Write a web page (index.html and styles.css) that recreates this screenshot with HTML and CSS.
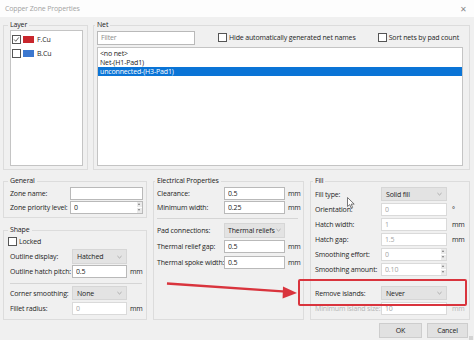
FILE: index.html
```html
<!DOCTYPE html>
<html lang="en">
<head>
  <meta charset="UTF-8">
  <meta name="viewport" content="width=device-width, initial-scale=1.0">
  <title>Copper Zone Properties</title>
  <link rel="stylesheet" href="styles.css">
</head>
<body>
  <div class="titlebar">
    <span class="title">Copper Zone Properties</span>
    <span class="close">✕</span>
  </div>

  <!-- Layer + net pickers -->
  <div class="top">
    <fieldset class="group layer-group">
      <legend>Layer</legend>
      <div class="listbox layers">
        <div class="layer-row">
          <span class="check"><svg viewBox="0 0 9 9"><polyline points="1.5,4.5 3.5,6.8 7.5,1.8" /></svg></span>
          <span class="swatch red"></span>F.Cu
        </div>
        <div class="layer-row">
          <span class="check"></span>
          <span class="swatch blue"></span>B.Cu
        </div>
      </div>
    </fieldset>

    <fieldset class="group net-group">
      <legend>Net</legend>
      <div class="net-filters">
        <input class="text filter" placeholder="Filter">
        <label class="checkline hide-auto"><span class="check"></span>Hide automatically generated net names</label>
        <label class="checkline sort-pads"><span class="check"></span>Sort nets by pad count</label>
      </div>
      <div class="listbox nets">
        <div class="net">&lt;no net&gt;</div>
        <div class="net">Net-(H1-Pad1)</div>
        <div class="net selected">unconnected-(H3-Pad1)</div>
      </div>
    </fieldset>
  </div>

  <!-- Settings -->
  <div class="bottom">
    <div class="left-col">
      <fieldset class="group general">
        <legend>General</legend>
        <div class="rows">
          <span class="lbl">Zone name:</span>
          <input class="text" value="">
          <span class="lbl">Zone priority level:</span>
          <div class="spin"><input class="text" value="0"><span class="spinner"><i class="up"></i><i class="down"></i></span></div>
        </div>
      </fieldset>

      <fieldset class="group shape">
        <legend>Shape</legend>
        <label class="checkline locked"><span class="check"></span>Locked</label>
        <div class="rows">
          <span class="lbl">Outline display:</span>
          <div class="select tall">Hatched<svg class="chev" viewBox="0 0 6 4"><polyline points="0.5,0.8 3,3.2 5.5,0.8" /></svg></div>
          <span></span>
          <span class="lbl">Outline hatch pitch:</span>
          <input class="text" value="0.5">
          <span class="unit">mm</span>
        </div>
        <div class="sep"></div>
        <div class="rows">
          <span class="lbl">Corner smoothing:</span>
          <div class="select">None<svg class="chev" viewBox="0 0 6 4"><polyline points="0.5,0.8 3,3.2 5.5,0.8" /></svg></div>
          <span></span>
          <span class="lbl">Fillet radius:</span>
          <input class="text" value="0" disabled>
          <span class="unit">mm</span>
        </div>
      </fieldset>
    </div>

    <fieldset class="group electrical">
      <legend>Electrical Properties</legend>
      <div class="rows">
        <span class="lbl">Clearance:</span>
        <input class="text" value="0.5">
        <span class="unit">mm</span>
        <span class="lbl">Minimum width:</span>
        <input class="text" value="0.25">
        <span class="unit">mm</span>
      </div>
      <div class="sep"></div>
      <div class="rows pads">
        <span class="lbl">Pad connections:</span>
        <div class="select tall">Thermal reliefs<svg class="chev" viewBox="0 0 6 4"><polyline points="0.5,0.8 3,3.2 5.5,0.8" /></svg></div>
        <span></span>
        <span class="lbl">Thermal relief gap:</span>
        <input class="text" value="0.5">
        <span class="unit">mm</span>
        <span class="lbl">Thermal spoke width:</span>
        <input class="text" value="0.5">
        <span class="unit">mm</span>
      </div>
    </fieldset>

    <fieldset class="group fill">
      <legend>Fill</legend>
      <div class="rows">
        <span class="lbl">Fill type:</span>
        <div class="select">Solid fill<svg class="chev" viewBox="0 0 6 4"><polyline points="0.5,0.8 3,3.2 5.5,0.8" /></svg></div>
        <span></span>
        <span class="lbl">Orientation:</span>
        <input class="text" value="0" disabled>
        <span class="unit">°</span>
        <span class="lbl">Hatch width:</span>
        <input class="text" value="1" disabled>
        <span class="unit">mm</span>
        <span class="lbl">Hatch gap:</span>
        <input class="text" value="1.5" disabled>
        <span class="unit">mm</span>
        <span class="lbl">Smoothing effort:</span>
        <div class="spin"><input class="text" value="0" disabled><span class="spinner"><i class="up"></i><i class="down"></i></span></div>
        <span></span>
        <span class="lbl">Smoothing amount:</span>
        <div class="spin"><input class="text" value="0.10" disabled><span class="spinner"><i class="up"></i><i class="down"></i></span></div>
        <span></span>
      </div>
      <div class="rows islands">
        <span class="lbl">Remove islands:</span>
        <div class="select">Never<svg class="chev" viewBox="0 0 6 4"><polyline points="0.5,0.8 3,3.2 5.5,0.8" /></svg></div>
        <span></span>
        <span class="lbl faded">Minimum island size:</span>
        <input class="text" value="10" disabled>
        <span class="unit faded">mm</span>
      </div>
    </fieldset>
  </div>

  <div class="buttons">
    <button class="btn">OK</button>
    <button class="btn">Cancel</button>
    <span class="grip"></span>
  </div>

  <!-- annotation drawn over the dialog -->
  <div class="callout"></div>
  <svg class="arrow" viewBox="0 0 474 340">
    <path d="M167 283.5 L286 291.6" />
    <polygon points="297,293 283,286.5 282.6,298.5" />
  </svg>
  <svg class="cursor" viewBox="0 0 8 12">
    <path d="M0.5 0.5 L0.5 9.5 L2.7 7.6 L4.2 11 L5.6 10.4 L4.2 7.1 L7.2 7.1 Z" />
  </svg>
</body>
</html>
```

FILE: styles.css
```css
* {
  box-sizing: border-box;
}

body {
  margin: 0;
  width: 474px;
  height: 340px;
  overflow: hidden;
  position: relative;
  background: #f0f0f0;
  font-family: 'Open Sans', 'Noto Sans', sans-serif;
  font-size: 7px;
  letter-spacing: -0.15px;
  color: #1e1e1e;
}

.titlebar {
  height: 17px;
  background: #fdfdfd;
  display: flex;
  align-items: center;
  justify-content: space-between;
  padding: 0 7px 0 5px;
  color: #a3a3a3;
  font-size: 7px;
}
.close {
  font-size: 8px;
  color: #8a8a8a;
}

/* group boxes */
.group {
  margin: 0;
  min-width: 0;
  border: 1px solid #dcdcdc;
  padding: 1px 4px 3px 6px;
}
.group legend {
  padding: 0 2px;
  height: 10px;
  line-height: 10px;
  margin-left: -2px;
  color: #222;
}

.top {
  display: flex;
  gap: 5px;
  height: 153px;
  padding: 3px 4px 0 3px;
}
.layer-group {
  width: 85px;
  display: flex;
  padding-top: 0;
}
.net-group {
  flex: 1;
  display: flex;
  flex-direction: column;
  padding: 0 6px 3px 3px;
}

.listbox {
  background: #fff;
  border: 1px solid #c4c4c4;
}
.layers {
  flex: 1;
  padding: 1px 1px;
}
.layer-row {
  height: 14px;
  display: flex;
  align-items: center;
}
.check {
  display: inline-block;
  width: 9px;
  height: 9px;
  border: 1px solid #555;
  background: #fff;
  margin-right: 2px;
  flex: none;
}
.check svg {
  display: block;
  width: 7px;
  height: 7px;
  fill: none;
  stroke: #333;
  stroke-width: 1;
}
.swatch {
  width: 11px;
  height: 7px;
  margin-right: 3px;
}
.swatch.red { background: #c8262c; }
.swatch.blue { background: #3c78d0; }

.net-filters {
  display: flex;
  align-items: center;
  height: 15px;
}
.checkline {
  display: flex;
  align-items: center;
  white-space: nowrap;
}
.hide-auto { margin-left: 23px; }
.sort-pads { margin-left: auto; margin-right: 4px; }
.nets {
  flex: 1;
  margin-top: 2px;
  padding-top: 1px;
}
.net {
  height: 9px;
  line-height: 9px;
  padding-left: 2px;
  color: #222;
}
.net.selected {
  background: #0a74d6;
  color: #fff;
}

/* inputs */
.text {
  width: 100%;
  height: 13px;
  margin: 0;
  padding: 0 3px;
  font: inherit;
  letter-spacing: inherit;
  color: #222;
  background: #fff;
  border: 1px solid #b9b9b9;
  outline: none;
}
.text::placeholder { color: #8d8d8d; }
.text:disabled {
  color: #a5a5a5;
  border-color: #dadada;
  background: #fff;
}
.filter {
  width: 98px;
  height: 14px;
}

.select {
  height: 14px;
  display: flex;
  align-items: center;
  justify-content: space-between;
  padding: 0 4px 0 4px;
  white-space: nowrap;
  background: #e3e3e3;
  border: 1px solid #d6d6d6;
  color: #222;
}
.select.tall { height: 15px; }
.chev {
  width: 5px;
  height: 4px;
  fill: none;
  stroke: #9a9a9a;
  stroke-width: 0.9;
  flex: none;
}

.spin {
  position: relative;
  height: 13px;
}
.spinner {
  position: absolute;
  right: 1px;
  top: 1px;
  bottom: 1px;
  width: 5px;
  display: flex;
  flex-direction: column;
  gap: 1px;
}
.spinner i {
  flex: 1;
  background: #eaeaea;
  position: relative;
}
.spinner i::after {
  content: '';
  position: absolute;
  left: 1px;
  border-left: 1.5px solid transparent;
  border-right: 1.5px solid transparent;
}
.spinner .up::after { top: 1px; border-bottom: 2px solid #777; }
.spinner .down::after { top: 1px; border-top: 2px solid #777; }

.rows {
  display: grid;
  row-gap: 1px;
  align-items: center;
}
.lbl { white-space: nowrap; }
.unit { padding-left: 3px; }
.faded { color: #b5b5b5; }

.sep {
  height: 1px;
  background: #d5d5d5;
}

/* bottom section */
.bottom {
  display: grid;
  grid-template-columns: 144px 151px 160px;
  column-gap: 6px;
  height: 150px;
  padding: 6px 0 0 3px;
}
.left-col {
  display: flex;
  flex-direction: column;
  gap: 7px;
}
.general .rows {
  grid-template-columns: 60px 73px;
}
.shape {
  flex: 1;
}
.locked {
  height: 10px;
  margin-left: -2px;
  margin-bottom: 3px;
}
.shape .rows {
  grid-template-columns: 62px 55px auto;
  column-gap: 0;
}
.shape .sep {
  margin: 5px 0 2px;
}
.shape .rows + .sep + .rows {
  row-gap: 2px;
}

.electrical {
  padding-left: 3px;
}
.electrical .rows {
  grid-template-columns: 67px 61px auto;
}
.electrical .sep {
  margin: 4px 1px 4px 0;
}
.electrical .pads {
  row-gap: 2px;
  grid-auto-rows: 14px;
}
.electrical .pads .select {
  height: 15px;
  padding: 0 3px;
}

.fill {
  padding-left: 4px;
}
.fill .rows {
  grid-template-columns: 66px 66px auto;
  grid-auto-rows: 14px;
}
.fill .rows .unit {
  padding-left: 5px;
}
.fill .islands {
  margin-top: 10px;
  row-gap: 1px;
}

.buttons {
  display: flex;
  justify-content: flex-end;
  gap: 5px;
  padding: 3px 6px 0 0;
  position: relative;
}
.btn {
  height: 15px;
  width: 43px;
  margin: 0;
  padding: 0;
  font: inherit;
  letter-spacing: inherit;
  color: #222;
  background: #e1e1e1;
  border: 1px solid #cdcdcd;
}
.btn + .btn { width: 41px; }
.grip {
  position: absolute;
  right: 1px;
  bottom: -2px;
  width: 4px;
  height: 4px;
  background: radial-gradient(#b0b0b0 0.6px, transparent 0.8px) 0 0 / 2px 2px;
}

/* annotation overlays */
.callout {
  position: absolute;
  left: 298px;
  top: 279px;
  width: 169px;
  height: 27px;
  border: 2px solid #d9343d;
  border-radius: 2px;
}
.arrow {
  position: absolute;
  left: 0;
  top: 0;
  width: 474px;
  height: 340px;
  pointer-events: none;
}
.arrow path {
  fill: none;
  stroke: #d9343d;
  stroke-width: 2.4;
}
.arrow polygon {
  fill: #d9343d;
}
.cursor {
  position: absolute;
  left: 347px;
  top: 197px;
  width: 8px;
  height: 12px;
  fill: #fff;
  stroke: #555;
  stroke-width: 0.8;
}
```
